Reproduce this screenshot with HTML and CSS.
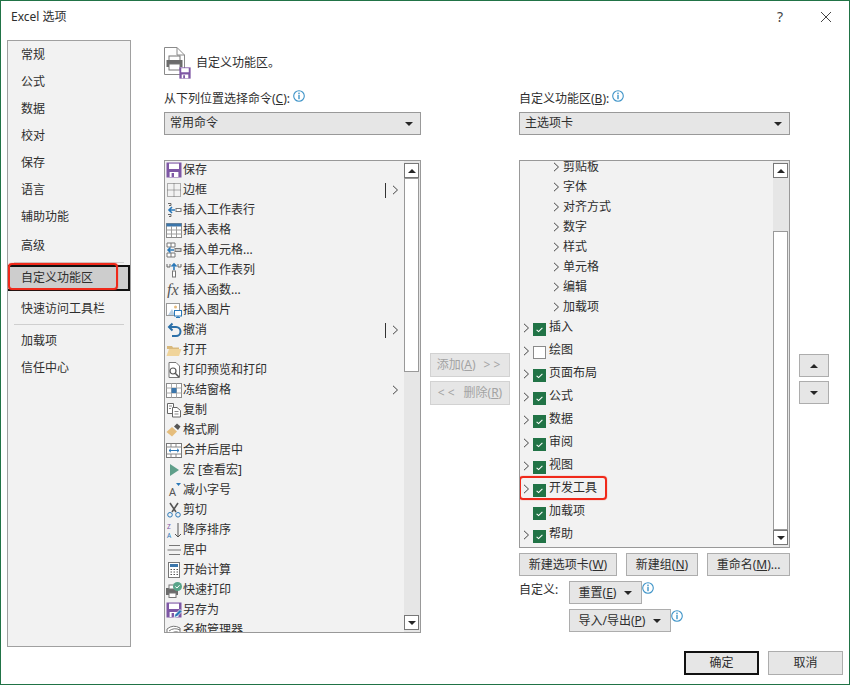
FILE: index.html
```html
<!DOCTYPE html>
<html lang="zh-CN">
<head>
<meta charset="utf-8">
<title>Excel 选项</title>
<link rel="stylesheet" href="styles.css">
</head>
<body>
<svg class="defs" width="0" height="0">
  <symbol id="info" viewBox="0 0 12 12"><circle cx="6" cy="6" r="5.3" fill="#fff" stroke="#3f94c8" stroke-width="1.1"/><rect x="5.3" y="2.6" width="1.4" height="1.5" fill="#3f94c8"/><rect x="5.3" y="4.8" width="1.4" height="4.4" fill="#3f94c8"/></symbol>
  <symbol id="chev" viewBox="0 0 7 10"><path d="M1 .8 5.5 5 1 9.2" fill="none" stroke="#444" stroke-width="1"/></symbol>
  <symbol id="check" viewBox="0 0 13 13"><rect width="13" height="13" fill="#217346"/><path d="M3.6 6.8 5.6 8.6 9.4 4.9" fill="none" stroke="#fff" stroke-width="1.1"/></symbol>
  <symbol id="floppy" viewBox="0 0 16 16"><rect x=".5" y=".5" width="15" height="15" fill="#7e57a5"/><rect x="3" y="1.6" width="10" height="5.4" fill="#fff"/><rect x="3.6" y="10" width="8.8" height="5" fill="#fff"/><rect x="5.6" y="11" width="2.4" height="4" fill="#7e57a5"/></symbol>
</svg>
<div class="window">
  <header class="titlebar">
    <span class="title">Excel 选项</span>
    <span class="help">?</span>
    <svg class="close" width="12" height="12" viewBox="0 0 12 12"><path d="M1 1 11 11M11 1 1 11" stroke="#444" stroke-width="1" fill="none"/></svg>
  </header>
  <div class="body">
    <nav class="sidebar">
      <div class="side-item">常规</div>
      <div class="side-item">公式</div>
      <div class="side-item">数据</div>
      <div class="side-item">校对</div>
      <div class="side-item">保存</div>
      <div class="side-item">语言</div>
      <div class="side-item">辅助功能</div>
      <div class="side-item side-gap">高级</div>
      <div class="side-sep"></div>
      <div class="side-item side-current">自定义功能区<span class="mark mark-side"></span></div>
      <div class="side-item side-after">快速访问工具栏</div>
      <div class="side-sep side-sep2"></div>
      <div class="side-item">加载项</div>
      <div class="side-item">信任中心</div>
    </nav>
    <main class="main">
      <div class="page-head">
        <svg width="28" height="32" viewBox="0 0 28 32"><path d="M.5.5H13L20.5 8V27.5H.5Z" fill="#fff" stroke="#8a8a8a"/><path d="M13 .5V8H20.5" fill="none" stroke="#8a8a8a"/><rect x="5" y="9" width="11" height="5" fill="#fff" stroke="#777"/><rect x="2.5" y="13" width="16" height="7" fill="#6b6b6b"/><rect x="5" y="17" width="11" height="6" fill="#fff" stroke="#777"/><use href="#floppy" x="15" y="20" width="12" height="12"/></svg>
        <span>自定义功能区。</span>
      </div>
      <div class="columns">
        <section class="col-left">
          <div class="label">从下列位置选择命令(<u>C</u>):<svg class="info" width="12" height="12"><use href="#info"/></svg></div>
          <div class="select"><span>常用命令</span><i class="caret"></i></div>
          <div class="list list-left">
            <div class="list-rows">
              <div class="cmd"><svg width="16" height="16"><use href="#floppy"/></svg>保存</div>
              <div class="cmd"><svg width="16" height="16" viewBox="0 0 16 16"><path d="M1.5 1.5H14.5V14.5H1.5ZM1.5 8H14.5M8 1.5V14.5" fill="none" stroke="#666" stroke-dasharray="1 1"/></svg>边框<i class="sub-bar"></i><svg class="sub-chev" width="7" height="10"><use href="#chev"/></svg></div>
              <div class="cmd"><svg width="16" height="16" viewBox="0 0 16 16"><path d="M2 1.5H5V3.5H3M2 12.5H5V14.5H3" fill="none" stroke="#666"/><path d="M9 8H3M6 5 3 8 6 11" fill="none" stroke="#2a78b8" stroke-width="1.6"/><rect x="10" y="6.5" width="5" height="3" fill="#fff" stroke="#777"/></svg>插入工作表行</div>
              <div class="cmd"><svg width="16" height="16" viewBox="0 0 16 16"><rect x=".5" y="1.5" width="15" height="14" fill="#fff" stroke="#8b8b8b"/><rect x=".5" y="1.5" width="15" height="3" fill="#3b76ab"/><path d="M.5 8H15.5M.5 12H15.5M5.5 4V15M10.5 4V15" stroke="#9d9d9d"/></svg>插入表格</div>
              <div class="cmd"><svg width="16" height="16" viewBox="0 0 16 16"><path d="M1 1H9V5H1ZM5 1V5M1 11H9V15H1ZM5 11V15" fill="#fff" stroke="#777"/><rect x="9" y="6.5" width="6" height="3" fill="#ccc" stroke="#777"/><path d="M8 8H2M4.5 5.5 2 8 4.500 10.500" fill="none" stroke="#2a78b8" stroke-width="1.5"/></svg>插入单元格...</div>
              <div class="cmd"><svg width="16" height="16" viewBox="0 0 16 16"><path d="M1 2V5H4V2M12 2V5H15V2" fill="none" stroke="#666"/><path d="M8 8V2M5.500 4.500 8 2 10.500 4.500" fill="none" stroke="#2a78b8" stroke-width="1.600"/><rect x="6.500" y="9" width="3" height="6" fill="#fff" stroke="#777"/></svg>插入工作表列</div>
              <div class="cmd"><svg width="16" height="16" viewBox="0 0 16 16"><text x="1" y="13" class="fx">fx</text></svg>插入函数...</div>
              <div class="cmd"><svg width="16" height="16" viewBox="0 0 16 16"><rect x=".5" y="1.500" width="13" height="12" fill="#fff" stroke="#999"/><path d="M2 13 6 7 9 13Z" fill="#b9cfe2"/><circle cx="9.500" cy="5" r="1.500" fill="#e5b97b"/><rect x="8.500" y="8.500" width="7" height="5.500" fill="#fff" stroke="#2a78b8"/><path d="M10 15.500H14M12 14V15.500" stroke="#2a78b8"/></svg>插入图片</div>
              <div class="cmd"><svg width="16" height="16" viewBox="0 0 16 16"><path d="M3 5H10A4 4 0 0 1 10 14H6M6.500 1.500 3 5 6.500 8.500" fill="none" stroke="#2a6fa8" stroke-width="2"/></svg>撤消<i class="sub-bar"></i><svg class="sub-chev" width="7" height="10"><use href="#chev"/></svg></div>
              <div class="cmd"><svg width="16" height="16" viewBox="0 0 16 16"><path d="M1 4H6L7 5.500H13V7H1Z" fill="#d9b97c"/><path d="M.5 14 3 7H15.500L13 14Z" fill="#f0d49a"/></svg>打开</div>
              <div class="cmd"><svg width="16" height="16" viewBox="0 0 16 16"><path d="M3 .5H10L13.500 4V15.500H3Z" fill="#fff" stroke="#777"/><circle cx="7" cy="9" r="3" fill="#fff" stroke="#555" stroke-width="1.200"/><path d="M9.500 11.500 13 15" stroke="#555" stroke-width="1.500"/></svg>打印预览和打印</div>
              <div class="cmd"><svg width="16" height="16" viewBox="0 0 16 16"><rect x=".5" y="1.500" width="15" height="14" fill="#fff" stroke="#8b8b8b"/><path d="M.5 6H15.500M.5 11H15.500M5.500 1.500V15.500M10.500 1.500V15.500" stroke="#aaa"/><rect x="5.500" y="6" width="5" height="5" fill="#3b76ab"/></svg>冻结窗格<svg class="sub-chev sub-chev-only" width="7" height="10"><use href="#chev"/></svg></div>
              <div class="cmd"><svg width="16" height="16" viewBox="0 0 16 16"><path d="M1.500 1.500H7.500V11.500H1.500Z" fill="#fff" stroke="#666"/><path d="M6.500 5.500H11L14.500 8.500V15H6.500Z" fill="#fff" stroke="#666"/><path d="M8.500 9.500H12.500M8.500 12H12.500M3 4H6M3 6.500H5" stroke="#888"/></svg>复制</div>
              <div class="cmd"><svg width="16" height="16" viewBox="0 0 16 16"><path d="M.5 10 6 5 11 9.500 6 14.500Z" fill="#e5bd7c"/><path d="M8 4.500 11 1.500 14.500 4.500 12 8Z" fill="#555"/></svg>格式刷</div>
              <div class="cmd"><svg width="16" height="16" viewBox="0 0 16 16"><rect x=".5" y="1.500" width="15" height="14" fill="#fff" stroke="#777"/><path d="M.5 5H15.500M.5 12H15.500M5 1.500V5M10 1.500V5M5 12V15.500M10 12V15.500" stroke="#888"/><path d="M3 8.500H13M5 6.800 3 8.500 5 10.200M11 6.800 13 8.500 11 10.200" fill="none" stroke="#2a78b8"/></svg>合并后居中</div>
              <div class="cmd"><svg width="16" height="16" viewBox="0 0 16 16"><path d="M4 2 13 8 4 14Z" fill="#5f9f8a"/></svg>宏 [查看宏]</div>
              <div class="cmd"><svg class="svg-open" width="16" height="16" viewBox="0 0 16 16"><text x="3" y="14" class="glyph-a">A</text><path d="M10 1H15L12.500 4Z" fill="#2a78b8"/></svg>减小字号</div>
              <div class="cmd"><svg width="16" height="16" viewBox="0 0 16 16"><path d="M4 1 10 10M12 1 6 10" stroke="#555" stroke-width="1.600" fill="none"/><circle cx="4" cy="12.800" r="2.300" fill="none" stroke="#2a78b8"/><circle cx="12" cy="12.800" r="2.300" fill="none" stroke="#2a78b8"/></svg>剪切</div>
              <div class="cmd"><svg class="svg-open" width="16" height="16" viewBox="0 0 16 16"><text x="1" y="7" class="glyph-z">Z</text><text x="1" y="16" class="glyph-z glyph-z2">A</text><path d="M12 1V15M9 12 12 15 15 12" fill="none" stroke="#555"/></svg>降序排序</div>
              <div class="cmd"><svg width="16" height="16" viewBox="0 0 16 16"><path d="M3 3.500H14M1.500 8H15M3 12.500H14" stroke="#777"/></svg>居中</div>
              <div class="cmd"><svg width="16" height="16" viewBox="0 0 16 16"><rect x="2.500" y=".5" width="11" height="15" fill="#fff" stroke="#777"/><rect x="4" y="2" width="8" height="3" fill="#3b76ab"/><path d="M4.500 7.500H6M7.500 7.500H9M10.500 7.500H12M4.500 10H6M7.500 10H9M10.500 10H12M4.500 12.500H6M7.500 12.500H9M10.500 12.500H12" stroke="#555"/></svg>开始计算</div>
              <div class="cmd"><svg width="16" height="16" viewBox="0 0 16 16"><rect x="0" y="6" width="12" height="7" fill="#6b6b6b"/><rect x="3" y="3" width="7" height="4" fill="#fff" stroke="#777"/><rect x="3" y="11" width="7" height="4.500" fill="#fff" stroke="#777"/><circle cx="11.500" cy="4.500" r="4.500" fill="#58a58a"/><path d="M9.300 4.500 11 6 13.600 3.200" fill="none" stroke="#fff"/></svg>快速打印</div>
              <div class="cmd"><svg width="16" height="16" viewBox="0 0 16 16"><use href="#floppy"/><path d="M8 15.500 9 12.500 14 7.500 16 9.500 11 14.500Z" fill="#2a78b8" stroke="#fff" stroke-width=".7"/></svg>另存为</div>
              <div class="cmd"><svg width="16" height="16" viewBox="0 0 16 16"><path d="M1 7Q7 2 14 6V15H1ZM3 9Q8 5 14 8M5 12Q9 8 14 11" fill="#fff" stroke="#777"/></svg>名称管理器</div>
            </div>
            <div class="scrollbar">
              <div class="sb-btn"><i class="caret caret-up"></i></div>
              <div class="sb-thumb sb-thumb-left"></div>
              <div class="sb-fill"></div>
              <div class="sb-btn"><i class="caret"></i></div>
            </div>
          </div>
        </section>
        <section class="col-mid">
          <div class="btn btn-off">添加(<u>A</u>)<span class="arrows">&gt;&gt;</span></div>
          <div class="btn btn-off"><span class="arrows arrows-l">&lt;&lt;</span>删除(<u>R</u>)</div>
        </section>
        <section class="col-right">
          <div class="label">自定义功能区(<u>B</u>):<svg class="info" width="12" height="12"><use href="#info"/></svg></div>
          <div class="select"><span>主选项卡</span><i class="caret"></i></div>
          <div class="list list-right">
            <div class="list-rows tree-rows">
              <div class="node"><svg width="7" height="10"><use href="#chev"/></svg>剪贴板</div>
              <div class="node"><svg width="7" height="10"><use href="#chev"/></svg>字体</div>
              <div class="node"><svg width="7" height="10"><use href="#chev"/></svg>对齐方式</div>
              <div class="node"><svg width="7" height="10"><use href="#chev"/></svg>数字</div>
              <div class="node"><svg width="7" height="10"><use href="#chev"/></svg>样式</div>
              <div class="node"><svg width="7" height="10"><use href="#chev"/></svg>单元格</div>
              <div class="node"><svg width="7" height="10"><use href="#chev"/></svg>编辑</div>
              <div class="node"><svg width="7" height="10"><use href="#chev"/></svg>加载项</div>
              <div class="tab"><svg class="tab-chev" width="7" height="10"><use href="#chev"/></svg><svg class="box" width="13" height="13"><use href="#check"/></svg>插入</div>
              <div class="tab"><svg class="tab-chev" width="7" height="10"><use href="#chev"/></svg><i class="box box-empty"></i>绘图</div>
              <div class="tab"><svg class="tab-chev" width="7" height="10"><use href="#chev"/></svg><svg class="box" width="13" height="13"><use href="#check"/></svg>页面布局</div>
              <div class="tab"><svg class="tab-chev" width="7" height="10"><use href="#chev"/></svg><svg class="box" width="13" height="13"><use href="#check"/></svg>公式</div>
              <div class="tab"><svg class="tab-chev" width="7" height="10"><use href="#chev"/></svg><svg class="box" width="13" height="13"><use href="#check"/></svg>数据</div>
              <div class="tab"><svg class="tab-chev" width="7" height="10"><use href="#chev"/></svg><svg class="box" width="13" height="13"><use href="#check"/></svg>审阅</div>
              <div class="tab"><svg class="tab-chev" width="7" height="10"><use href="#chev"/></svg><svg class="box" width="13" height="13"><use href="#check"/></svg>视图</div>
              <div class="tab"><svg class="tab-chev" width="7" height="10"><use href="#chev"/></svg><svg class="box" width="13" height="13"><use href="#check"/></svg>开发工具<span class="mark mark-tab"></span></div>
              <div class="tab tab-leaf"><svg class="box" width="13" height="13"><use href="#check"/></svg>加载项</div>
              <div class="tab"><svg class="tab-chev" width="7" height="10"><use href="#chev"/></svg><svg class="box" width="13" height="13"><use href="#check"/></svg>帮助</div>
            </div>
            <div class="scrollbar">
              <div class="sb-btn"><i class="caret caret-up"></i></div>
              <div class="sb-fill sb-fill-top"></div>
              <div class="sb-thumb sb-thumb-right"></div>
              <div class="sb-btn"><i class="caret"></i></div>
            </div>
          </div>
          <div class="btn-row">
            <div class="btn btn-tab">新建选项卡(<u>W</u>)</div>
            <div class="btn btn-group">新建组(<u>N</u>)</div>
            <div class="btn btn-rename">重命名(<u>M</u>)...</div>
          </div>
          <div class="custom">
            <span class="custom-label">自定义:</span>
            <div class="custom-stack">
              <div class="custom-line">
                <div class="btn btn-reset">重置(<u>E</u>)<i class="caret caret-btn"></i></div>
                <svg class="info-b" width="12" height="12"><use href="#info"/></svg>
              </div>
              <div class="custom-line">
                <div class="btn btn-export">导入/导出(<u>P</u>)<i class="caret caret-btn"></i></div>
                <svg class="info-b" width="12" height="12"><use href="#info"/></svg>
              </div>
            </div>
          </div>
        </section>
        <section class="col-move">
          <div class="btn btn-move"><i class="caret caret-up"></i></div>
          <div class="btn btn-move"><i class="caret"></i></div>
        </section>
      </div>
    </main>
  </div>
  <footer class="footer">
    <div class="btn btn-foot btn-default">确定</div>
    <div class="btn btn-foot">取消</div>
  </footer>
</div>
</body>
</html>
```
FILE: styles.css
```css
* { box-sizing: border-box; }
html, body { margin: 0; padding: 0; }
body {
  width: 850px;
  height: 685px;
  overflow: hidden;
  background: #fff;
  color: #2e2e2e;
  font: 12px/16px "Noto Sans", "Noto Sans CJK SC", sans-serif;
}
u { text-underline-offset: 1px; }
i { display: block; }
.defs { position: absolute; }
.window {
  width: 850px;
  height: 685px;
  border: 1px solid #217346;
  display: flex;
  flex-direction: column;
}
.titlebar {
  height: 39px;
  flex: none;
  display: flex;
  align-items: center;
  padding: 0 17px 8px 10px;
}
.title { flex: 1; }
.help { width: 43px; font-size: 14px; color: #444; }
.close { display: block; }
.body { display: flex; height: 607px; flex: none; }
.sidebar {
  width: 124px;
  margin-left: 6px;
  background: #f2f2f2;
  border: 1px solid #a0a0a0;
  display: flex;
  flex-direction: column;
}
.side-item {
  height: 27px;
  flex: none;
  display: flex;
  align-items: center;
  padding-left: 13px;
  position: relative;
}
.side-gap { margin-top: 2px; }
.side-sep { height: 1px; margin: 3px 6px 2px; background: #cfcfcf; flex: none; }
.side-sep2 { margin: 2px 6px 2px; }
.side-current {
  height: 26px;
  background: #cdcdcd;
  border: 2px solid #111;
  border-left: 0;
}
.side-after { margin-top: 4px; }
.mark {
  position: absolute;
  border: 2px solid #f0291a;
  border-radius: 4px;
  box-shadow: 0 0 1px #f0291a;
}
.mark-side { left: 0; top: -4px; width: 110px; height: 27px; }
.mark-tab { left: -1px; top: -2px; width: 88px; height: 24px; }
.main { margin-left: 33px; padding-top: 7px; flex: 1; }
.page-head { height: 43px; display: flex; align-items: flex-start; gap: 4px; }
.page-head span { margin-top: 8px; }
.columns { display: grid; grid-template-columns: 257px 80px 271px 30px; column-gap: 9px; }
.label { height: 22px; padding-top: 1px; display: flex; align-items: flex-start; }
.info { margin: -1px 0 0 3px; }
.select {
  height: 23px;
  background: #e6e6e6;
  border: 1px solid #999;
  display: flex;
  align-items: center;
  justify-content: space-between;
  padding: 0 7px 2px 5px;
}
.caret {
  width: 0;
  height: 0;
  border-left: 4px solid transparent;
  border-right: 4px solid transparent;
  border-top: 4px solid #262626;
}
.select .caret { margin-top: 2px; }
.caret-up { border-top: 0; border-bottom: 4px solid #262626; }
.list {
  margin-top: 25px;
  background: #f2f2f2;
  border: 1px solid #999;
  display: flex;
  overflow: hidden;
}
.list-left { height: 473px; }
.list-right { height: 388px; }
.list-rows { flex: 1; min-width: 0; }
.cmd {
  height: 20px;
  display: flex;
  align-items: center;
  padding: 0 5px 0 1px;
  gap: 1px;
  white-space: nowrap;
  position: relative;
  top: -1px;
}
.cmd > svg:first-child { flex: none; }
.svg-open { overflow: visible; }
.fx { font: italic 16px "Liberation Serif", serif; fill: #555; }
.glyph-a { font: 11px "Noto Sans", sans-serif; fill: #555; }
.glyph-z { font: 6.5px "Noto Sans", sans-serif; fill: #7e57a5; }
.glyph-z2 { fill: #2a78b8; }
.sub-bar { width: 1px; height: 15px; background: #333; margin-left: auto; }
.sub-chev { margin-left: 5px; flex: none; }
.sub-chev-only { margin-left: auto; }
.scrollbar {
  width: 16px;
  flex: none;
  display: flex;
  flex-direction: column;
  padding: 2px 1px 2px 0;
  background: #e6e6e6;
}
.sb-btn {
  height: 15px;
  flex: none;
  background: #fff;
  border: 1px solid #777;
  display: flex;
  align-items: center;
  justify-content: center;
}
.sb-thumb { background: #fff; border: 1px solid #999; flex: none; }
.sb-thumb-left { height: 194px; }
.sb-thumb-right { height: 299px; }
.sb-fill { flex: 1; }
.sb-fill-top { flex: none; height: 53px; }
.tree-rows { margin-top: -4px; }
.node {
  height: 20px;
  display: flex;
  align-items: center;
  padding-left: 33px;
  gap: 3px;
  white-space: nowrap;
}
.tab {
  height: 23px;
  display: flex;
  align-items: flex-start;
  padding: 2px 0 0 3px;
  position: relative;
  white-space: nowrap;
}
.tab-chev { margin: 4px 3px 0 0; flex: none; }
.tab-leaf { padding-left: 13px; }
.box { width: 13px; height: 13px; margin: 4px 3px 0 0; flex: none; }
.box-empty { background: #fff; border: 1px solid #8a8a8a; }
.btn {
  height: 24px;
  background: #e6e6e6;
  border: 1px solid #adadad;
  display: flex;
  align-items: center;
  justify-content: center;
  white-space: nowrap;
  flex: none;
}
.col-mid { padding-top: 263px; display: flex; flex-direction: column; gap: 4px; }
.btn-off { background: #e6e6e6; border-color: #d2d2d2; color: #a3a3a3; }
.arrows { margin-left: 8px; letter-spacing: 3px; }
.arrows-l { margin: 0 6px 0 0; }
.col-move { padding-top: 264px; display: flex; flex-direction: column; gap: 4px; }
.btn-move { height: 23px; }
.btn-row { display: flex; gap: 9px; margin-top: 5px; }
.btn-row .btn { height: 23px; }
.btn-tab { width: 98px; }
.btn-group { width: 72px; }
.btn-rename { width: 83px; }
.custom { display: flex; margin-top: 5px; }
.custom-label { width: 50px; margin-top: 1px; }
.custom-stack { display: flex; flex-direction: column; gap: 5px; }
.custom-line { display: flex; align-items: flex-start; }
.custom-line .btn { height: 23px; }
.btn-reset { width: 73px; }
.btn-export { width: 102px; }
.caret-btn { margin-left: 8px; }
.info-b { margin: 1px 0 0 0; }
.footer {
  display: flex;
  justify-content: flex-end;
  gap: 9px;
  padding: 4px 6px 0 0;
}
.btn-foot { width: 75px; }
.btn-default { border: 2px solid #111; }
```
